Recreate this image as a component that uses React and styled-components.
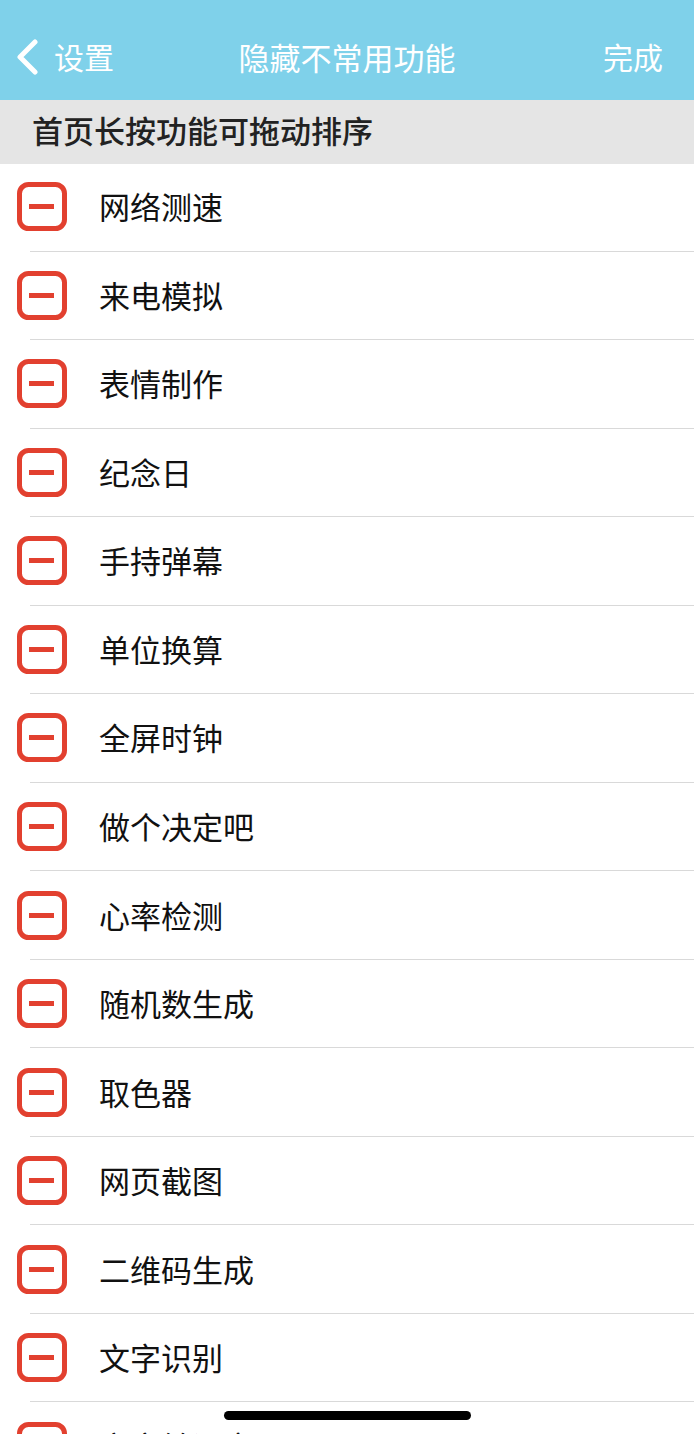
import React from 'react';
import styled, { createGlobalStyle } from 'styled-components';

const items = [
  '网络测速',
  '来电模拟',
  '表情制作',
  '纪念日',
  '手持弹幕',
  '单位换算',
  '全屏时钟',
  '做个决定吧',
  '心率检测',
  '随机数生成',
  '取色器',
  '网页截图',
  '二维码生成',
  '文字识别',
  '文字转语音',
];

const GlobalStyle = createGlobalStyle`
  html, body {
    margin: 0;
    padding: 0;
    background: #ffffff;
  }
  body {
    font-family: "Noto Sans CJK SC", "Noto Sans", sans-serif;
    overflow: hidden;
  }
`;

function MinusIcon() {
  return (
    <svg width="50" height="50" viewBox="0 0 50 50">
      <rect x="2.5" y="2.5" width="45" height="44" rx="9" fill="none" stroke="#e2402f" strokeWidth="5" />
      <rect x="12" y="22" width="25" height="5" fill="#e2402f" />
    </svg>
  );
}

function BackChevron() {
  return (
    <svg width="24" height="36" viewBox="0 0 24 36">
      <path d="M20 3 L5 18 L20 33" fill="none" stroke="#ffffff" strokeWidth="5" strokeLinecap="round" strokeLinejoin="round" />
    </svg>
  );
}

export default function App() {
  return (
    <>
      <GlobalStyle />
      <Page>
        <NavBar>
          <BackButton>
            <BackChevron />
            <NavText>设置</NavText>
          </BackButton>
          <Title>隐藏不常用功能</Title>
          <DoneButton>完成</DoneButton>
        </NavBar>
        <SectionHeader>首页长按功能可拖动排序</SectionHeader>
        <List>
          {items.map((name) => (
            <Row key={name}>
              <IconBox>
                <MinusIcon />
              </IconBox>
              <Label>{name}</Label>
            </Row>
          ))}
        </List>
        <HomeIndicator />
      </Page>
    </>
  );
}

const Page = styled.div`
  width: 694px;
  height: 1434px;
  overflow: hidden;
  position: relative;
  background: #ffffff;
`;

const NavBar = styled.div`
  height: 100px;
  box-sizing: border-box;
  padding: 14px 31px 0 15px;
  background: #7fd1ea;
  display: flex;
  align-items: center;
  justify-content: space-between;
  position: relative;
`;

const BackButton = styled.div`
  display: flex;
  align-items: center;
  gap: 15px;
  color: #ffffff;
`;

const NavText = styled.span`
  font-size: 30px;
  color: #ffffff;
  line-height: 1;
  padding-bottom: 3px;
`;

const Title = styled.div`
  position: absolute;
  left: 0;
  right: 0;
  top: 12px;
  bottom: 0;
  display: flex;
  align-items: center;
  justify-content: center;
  font-size: 31px;
  color: #ffffff;
  pointer-events: none;
`;

const DoneButton = styled.span`
  font-size: 30px;
  color: #ffffff;
  line-height: 1;
  padding-bottom: 3px;
`;

const SectionHeader = styled.div`
  height: 64px;
  box-sizing: border-box;
  padding: 0 0 6px 32px;
  background: #e5e5e5;
  display: flex;
  align-items: center;
  font-size: 31px;
  font-weight: 500;
  color: #222222;
`;

const List = styled.div`
  display: flex;
  flex-direction: column;
`;

const Row = styled.div`
  height: 88.54px;
  box-sizing: border-box;
  display: flex;
  align-items: center;
  position: relative;
  &::after {
    content: '';
    position: absolute;
    left: 30px;
    right: 0;
    bottom: 1px;
    height: 1px;
    background: #d9d9d9;
  }
`;

const IconBox = styled.div`
  width: 50px;
  height: 50px;
  margin-left: 17px;
  margin-right: 32px;
  margin-bottom: 2px;
  display: flex;
`;

const Label = styled.span`
  font-size: 31px;
  color: #111111;
  line-height: 1;
  padding-bottom: 5px;
`;

const HomeIndicator = styled.div`
  position: absolute;
  left: 224px;
  top: 1411px;
  width: 247px;
  height: 9px;
  border-radius: 5px;
  background: #000000;
`;
